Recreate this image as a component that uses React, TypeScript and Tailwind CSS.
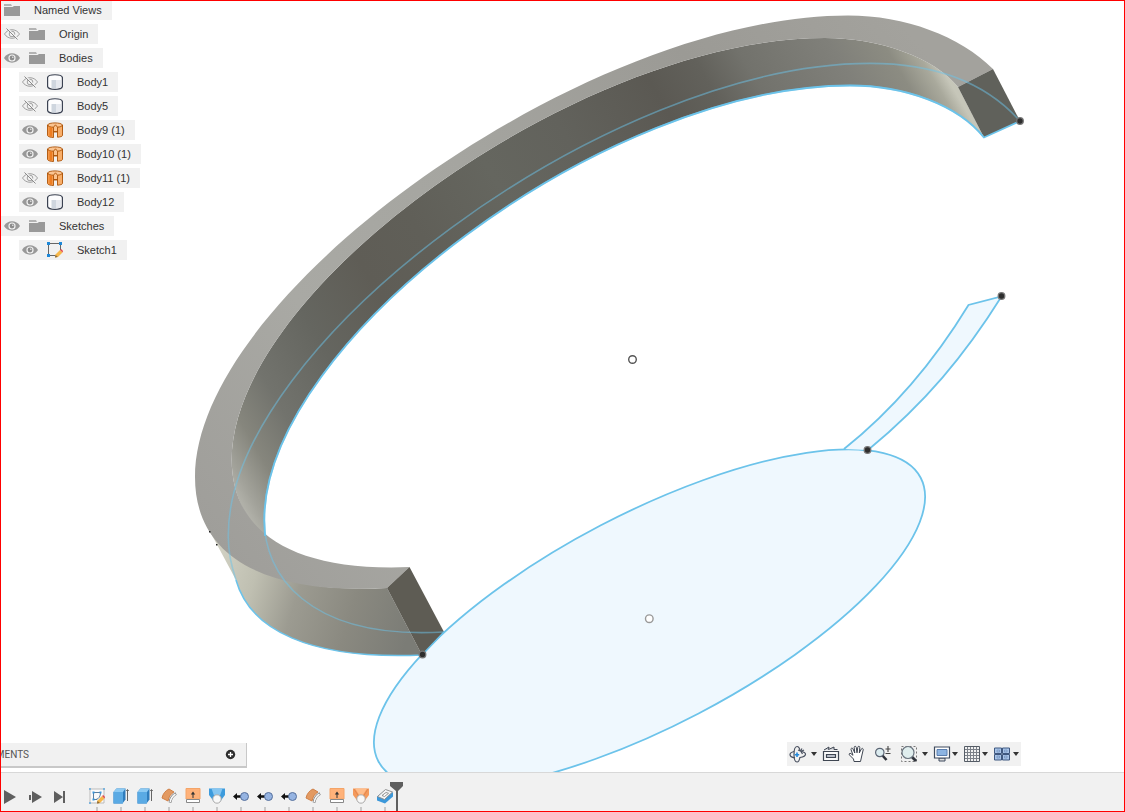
import React, { useState } from 'react';

type IconName = 'folder' | 'body' | 'surface' | 'sketch';

interface TreeNode {
  label: string;
  icon: IconName;
  level: number;
  visible?: boolean;
}

const nodes: TreeNode[] = [
  { label: 'Named Views', icon: 'folder', level: 0 },
  { label: 'Origin', icon: 'folder', level: 0, visible: false },
  { label: 'Bodies', icon: 'folder', level: 0, visible: true },
  { label: 'Body1', icon: 'body', level: 1, visible: false },
  { label: 'Body5', icon: 'body', level: 1, visible: false },
  { label: 'Body9 (1)', icon: 'surface', level: 1, visible: true },
  { label: 'Body10 (1)', icon: 'surface', level: 1, visible: true },
  { label: 'Body11 (1)', icon: 'surface', level: 1, visible: false },
  { label: 'Body12', icon: 'body', level: 1, visible: true },
  { label: 'Sketches', icon: 'folder', level: 0, visible: true },
  { label: 'Sketch1', icon: 'sketch', level: 1, visible: true },
];

const Eye = ({ open }: { open: boolean }) =>
  open ? (
    <svg width="16" height="16" viewBox="0 0 16 16">
      <path d="M0 8C3.500 1.800 12.500 1.800 16 8C12.500 14.200 3.500 14.200 0 8Z" fill="#999" />
      <circle cx="8" cy="8" r="3.600" fill="#f1f1f1" />
      <circle cx="8" cy="8" r="2.400" fill="#8c8c8c" />
      <circle cx="8.800" cy="7.200" r=".7" fill="#f1f1f1" />
    </svg>
  ) : (
    <svg width="16" height="16" viewBox="0 0 16 16" fill="none" stroke="#a0a0a0">
      <path d="M.5 8C4 2.300 12 2.300 15.500 8C12 13.700 4 13.700 .5 8Z" />
      <circle cx="8" cy="8" r="2.800" />
      <path d="M3.500 2.500L14 13" stroke="#f1f1f1" strokeWidth="1.500" />
      <path d="M2.500 2.500L13.500 13.500" stroke="#888" />
    </svg>
  );

const Pencil = () => (
  <g>
    <path d="M8.500 12.500L13 8L15.500 10.500L11 15L8 15.500Z" fill="#f7b84a" />
    <path d="M13 8L14.200 7L16 9L15.500 10.500Z" fill="#e5484d" />
    <path d="M8.500 12.800L10.800 15L8 15.600Z" fill="#8a6a3c" />
  </g>
);

const TreeIcon = ({ name }: { name: IconName }) => {
  switch (name) {
    case 'folder':
      return (
        <svg width="16" height="16" viewBox="0 0 16 16" fill="#999">
          <path d="M0 2H7L8 4H0Z" opacity=".7" />
          <path d="M0 5H8.500L10 4H16V14H0Z" />
        </svg>
      );
    case 'body':
      return (
        <svg width="16" height="16" viewBox="0 0 16 16">
          <path
            d="M.6 3.500C1.500 -.2 14.500 -.2 15.400 3.500V12.500C14.500 16.200 1.500 16.200 .6 12.500Z"
            fill="#fdfdfe"
            stroke="#3b4252"
            strokeWidth="1.200"
          />
          <path d="M4.500 6H9V14.500H4.500Z" fill="#cfd6df" />
          <path d="M9 6H14V13.500L9 14.500Z" fill="#e6e9ef" />
        </svg>
      );
    case 'surface':
      return (
        <svg width="16" height="16" viewBox="0 0 16 16" stroke="#ad5207" strokeWidth=".9" strokeLinejoin="round">
          <path d="M.5 3C1.500 .2 14.500 .2 15.500 3V8L10.500 10H6Z" fill="#fac491" />
          <path d="M.5 3C1 4.500 3.500 5.200 6.500 5.200V15.500C3.500 15.400 1 14.800 .5 13.500Z" fill="#f49a4c" />
          <path d="M2.500 5.500H5V14.500L2.500 14Z" fill="#ed7d22" stroke="none" />
          <path d="M15.500 3C15.200 4.300 13 5 10.500 5.200V15.200C13 15 15.200 14.500 15.500 13.500Z" fill="#f8ae69" />
          <path d="M6.500 5.200L8.500 2.800M10.500 5.200L8.500 2.800M6.500 9.500H10.500" fill="none" />
        </svg>
      );
    default:
      return (
        <svg width="16" height="16" viewBox="0 0 16 16">
          <path d="M1.500 3V13M3 1.500H13M13.500 3V8M3 13.500H8" stroke="#666" fill="none" />
          <path d="M0 0H3V3H0ZM12 0H15V3H12ZM0 12H3V15H0Z" fill="#1e88d8" />
          <Pencil />
        </svg>
      );
  }
};

const TreeRow = ({ node }: { node: TreeNode }) => {
  const [visible, setVisible] = useState(!!node.visible);
  return (
    <li className={`flex h-5 w-fit items-center bg-[#f1f1f1] pl-[3px] pr-2.5 ${node.level ? 'ml-[18px]' : ''}`}>
      {node.visible !== undefined && (
        <button
          type="button"
          aria-label={`Toggle ${node.label}`}
          className="mr-[9px]"
          onClick={() => setVisible(!visible)}
        >
          <Eye open={visible} />
        </button>
      )}
      <TreeIcon name={node.icon} />
      <span className="ml-3.5 text-[11px] leading-5 text-[#333]">{node.label}</span>
    </li>
  );
};

const outerTop =
  'M993 69C960 36 905 15.500 848 15.500C587 15.500 195 292 195 477C195 557 265 595 387 588';
const bottomInner =
  'M984 137.500C958 105 905 85.500 850 85.500C607 85.500 264.300 340 264.300 520C264 572 305 640 444 632';
const bottomOuter =
  'M1020 121C985 82 935 63.400 870 63.400C610 63.400 228.300 344 228.300 535C228 550 231 565 236 580';

const Dot = ({ x, y }: { x: number; y: number }) => (
  <circle cx={x} cy={y} r="3.300" fill="#2e2e2e" stroke="#777" strokeWidth="1.300" />
);

const Viewport = () => (
  <svg
    className="absolute inset-0 h-full w-full"
    viewBox="1 1 1123 771"
    preserveAspectRatio="xMinYMin slice"
    role="img"
    aria-label="Model viewport"
  >
    <defs>
      <linearGradient id="inner" gradientUnits="userSpaceOnUse" x1="240" y1="520" x2="960" y2="100">
        <stop offset="0" stopColor="#bdbdb5" />
        <stop offset=".025" stopColor="#a3a39b" />
        <stop offset=".06" stopColor="#86867d" />
        <stop offset=".11" stopColor="#72736d" />
        <stop offset=".19" stopColor="#656660" />
        <stop offset=".28" stopColor="#5f5d56" />
        <stop offset=".36" stopColor="#605f58" />
        <stop offset=".47" stopColor="#65665f" />
        <stop offset=".57" stopColor="#62625c" />
        <stop offset=".69" stopColor="#5b5953" />
        <stop offset=".75" stopColor="#62615b" />
        <stop offset=".8" stopColor="#72726c" />
        <stop offset=".9" stopColor="#80807a" />
        <stop offset=".955" stopColor="#8c8c82" />
        <stop offset=".985" stopColor="#a9a99c" />
        <stop offset="1" stopColor="#c6c6b9" />
      </linearGradient>
      <linearGradient id="outer" gradientUnits="userSpaceOnUse" x1="215" y1="570" x2="410" y2="630">
        <stop offset="0" stopColor="#d0d0c2" />
        <stop offset=".2" stopColor="#bfbfb1" />
        <stop offset=".42" stopColor="#9c9b91" />
        <stop offset=".7" stopColor="#8a8980" />
        <stop offset="1" stopColor="#7b7c76" />
      </linearGradient>
      <linearGradient id="top" gradientUnits="userSpaceOnUse" x1="230" y1="560" x2="900" y2="20">
        <stop offset="0" stopColor="#9f9e9a" />
        <stop offset=".25" stopColor="#a9a9a4" />
        <stop offset=".5" stopColor="#a5a5a0" />
        <stop offset=".78" stopColor="#9b9a95" />
        <stop offset="1" stopColor="#a3a29d" />
      </linearGradient>
    </defs>

    {/* base profile */}
    <g fill="#eff8fe" stroke="#6cc3ea" strokeWidth="1.800">
      <ellipse cx="649.500" cy="619.500" rx="306" ry="106" transform="rotate(-27.600 649.500 619.500)" />
      <path d="M844 449C893 410 935 360 968.500 305L1001.500 296.500C965 355 925 403 868 450" />
    </g>

    {/* ring body */}
    <path
      d="M958 87C935 58 880 38 825 38C582 38 231.700 287 231.700 460C232 492 243 516 265 537L264.300 520C264.300 340 607 85.500 850 85.500C905 85.500 958 105 984 137.500Z"
      fill="url(#inner)"
    />
    <path
      d="M207 526L236 580C250 630 310 660 422 655L387 588C300 592 240 575 207 526Z"
      fill="url(#outer)"
    />
    <path
      d={`${outerTop}L409.500 567C285 572 232 527 231.700 460C231.700 287 582 38 825 38C880 38 935 58 958 87Z`}
      fill="url(#top)"
    />
    <path d="M409.500 567L387 588L422 655L444 632Z" fill="#5e5c54" />
    <path d="M993 69L958 87L984 137.500L1020 121Z" fill="#60615b" />
    <path d="M209 531h1.500v1.500h-1.500zM216 544h1.500v1.500h-1.500z" fill="#222" />

    {/* sketch edges, dimmed where they run behind the body */}
    <g fill="none" stroke="#6cc3ea">
      <path d={bottomOuter} strokeWidth="1.600" opacity=".5" />
      <path d={bottomInner} strokeWidth="1.600" opacity=".5" />
      <path
        d="M265 536L264.300 520C264.300 340 607 85.500 850 85.500C905 85.500 958 105 984 137.500L1020 121"
        strokeWidth="1.800"
      />
      <path d="M236 580C250 630 310 660 422 655L444 632" strokeWidth="1.600" />
    </g>

    <Dot x={1020} y={121} />
    <Dot x={1001.5} y={296} />
    <Dot x={867.5} y={450} />
    <Dot x={422.5} y={654.5} />
    <circle cx="632.500" cy="359.500" r="3.800" fill="#fff" stroke="#555" strokeWidth="1.400" />
    <circle cx="649.300" cy="618.700" r="3.800" fill="#fff" stroke="#999" strokeWidth="1.400" />
  </svg>
);

const Caret = () => (
  <svg width="6" height="16" viewBox="0 0 6 16">
    <path d="M0 6H6L3 10Z" fill="#333" />
  </svg>
);

const Orbit = () => (
  <svg width="18" height="18" viewBox="0 0 18 18" fill="none" stroke="#4a5160" strokeWidth="1.200">
    <path d="M11 5.500C10.500 3 9.300 1.500 8 1.500C6 1.500 5 5 5 9.500C5 14 6.200 17 8 17C9.500 17 10.500 15 11 12" />
    <path d="M5 6.500C2.500 7.200 1 8.200 1 9.500C1 11.300 3 12.500 6 12.800M11 12.500C14.500 12 16.500 10.800 16.500 9.300C16.500 8 15 7 12.500 6.500" />
    <path d="M9 5L11.500 6L13 3.500M13.500 9L12 6.500L15 5" />
    <path d="M8 7.500V12M5.800 9.700H10.200" stroke="#2389dc" strokeWidth="1.600" />
  </svg>
);

const LookAt = () => (
  <svg width="18" height="18" viewBox="0 0 18 18" fill="none" stroke="#3f4652" strokeWidth="1.200">
    <path d="M2 5L7 2L6.500 4.500L12 2V4.500H15.500" fill="#cfd2d8" strokeWidth="1" />
    <path d="M1.500 6.500H16.500V15.500H1.500Z" fill="#fafafa" />
    <path d="M4.500 9.500H13.500V12.500H4.500Z" fill="#b9bec8" />
  </svg>
);

const Pan = () => (
  <svg width="18" height="18" viewBox="0 0 18 18" fill="#fff" stroke="#3f4652" strokeLinejoin="round">
    <path d="M6 16.500L5.500 14L1.500 10C.5 8.800 1.800 7.800 3 8.700L5 10.300L3 4.500C2.700 3 4.500 2.500 5 4L6.800 8L6.200 2.500C6.200 .9 8 .9 8.300 2.500L9 7.800L9.800 2.200C10.200 .8 11.900 1 11.800 2.600L11.300 8L13.300 4C14 2.800 15.500 3.400 15.200 4.800L13.500 12L12.500 16.500Z" />
  </svg>
);

const Zoom = () => (
  <svg width="18" height="18" viewBox="0 0 18 18" fill="none">
    <path d="M8.500 10.500L12.500 15" stroke="#30343c" strokeWidth="2.600" />
    <circle cx="5.800" cy="7.500" r="4.200" fill="#dcecf0" stroke="#5b6574" strokeWidth="1.200" />
    <path d="M14 1V7M11.500 4H16.500M11.500 8.500H16.500" stroke="#444" strokeWidth="1.100" />
  </svg>
);

const ZoomWindow = () => (
  <svg width="18" height="18" viewBox="0 0 18 18" fill="none">
    <path d="M1.500 1.500H16.500V16.500H1.500Z" stroke="#777" strokeDasharray="2 2" />
    <path d="M11.500 11.500L16 16" stroke="#30343c" strokeWidth="2.800" />
    <circle cx="8" cy="7.500" r="6" fill="#e0eeee" stroke="#6a747f" strokeWidth="1.200" />
  </svg>
);

const Display = () => (
  <svg width="18" height="18" viewBox="0 0 18 18" stroke="#3f4b5e">
    <path d="M6 13H12V16H6Z" fill="#ddd" />
    <path d="M1.500 2H16.500V13H1.500Z" fill="#fff" strokeWidth="1.200" />
    <path d="M4 4.500H14V10.500H4Z" fill="#8db4e2" stroke="#5b7eae" />
  </svg>
);

const GridIcon = () => (
  <svg width="18" height="18" viewBox="0 0 18 18" fill="none" stroke="#7b8088">
    <path d="M4.500 2V16M7.500 2V16M10.500 2V16M13.500 2V16M2 4.500H16M2 7.500H16M2 10.500H16M2 13.500H16" />
    <path d="M1.500 1.500H16.500V16.500H1.500Z" stroke="#555c66" />
  </svg>
);

const Panes = () => (
  <svg width="18" height="18" viewBox="0 0 18 18" fill="#a9c4e8" stroke="#3f5880">
    <path d="M1.500 3H8.500V8.500H1.500ZM9.500 3H16.500V8.500H9.500ZM1.500 9.500H8.500V15H1.500ZM9.500 9.500H16.500V15H9.500Z" />
    <path
      d="M4 5H6.500V7H4ZM11.500 5H14V7H11.500ZM4 11H6.500V13H4ZM11.500 11H14V13H11.500Z"
      stroke="#7594c0"
      strokeWidth=".8"
    />
  </svg>
);

const NavBar = () => (
  <div className="flex h-6 items-center bg-[#f1f1f1] px-0.5">
    <button type="button" aria-label="Orbit" className="flex items-center gap-1">
      <Orbit />
      <Caret />
    </button>
    <button type="button" aria-label="Look at" className="ml-[5px]">
      <LookAt />
    </button>
    <button type="button" aria-label="Pan" className="ml-2">
      <Pan />
    </button>
    <button type="button" aria-label="Zoom" className="ml-2">
      <Zoom />
    </button>
    <button type="button" aria-label="Zoom window" className="ml-2 flex items-center gap-1">
      <ZoomWindow />
      <Caret />
    </button>
    <button type="button" aria-label="Display settings" className="ml-[5px] flex items-center gap-px">
      <Display />
      <Caret />
    </button>
    <button type="button" aria-label="Grid and snaps" className="ml-[5px] flex items-center gap-px">
      <GridIcon />
      <Caret />
    </button>
    <button type="button" aria-label="Viewports" className="ml-[5px] flex items-center gap-0.5">
      <Panes />
      <Caret />
    </button>
  </div>
);

const features = [
  'sketch',
  'extrude',
  'extrude',
  'patch',
  'offset',
  'loft',
  'move',
  'move',
  'move',
  'patch',
  'offset',
  'loft-surface',
  'thicken',
];

const FeatureIcon = ({ name }: { name: string }) => {
  switch (name) {
    case 'sketch':
      return (
        <>
          <path d="M1 1H15V15H1Z" fill="#fafafa" stroke="#bbb" />
          <path d="M4.500 5V11.500H8M5 4.500H11.500C11.500 8 10 11 7 11.500" fill="none" stroke="#5b7fa0" />
          <path d="M3.500 3.500h2v2h-2zM10.500 3.500h2v2h-2zM3.500 10.500h2v2h-2z" fill="#3b97dc" />
          <path d="M0 0h2v2H0zM14 0h2v2h-2zM0 14h2v2H0z" fill="#7db4dc" />
          <Pencil />
        </>
      );
    case 'extrude':
      return (
        <>
          <path d="M.5 4L3.500 .5H12.500V11.500L9.500 15.500H.5Z" fill="#2f7dbd" />
          <path d="M.5 4L3.500 .5H12.500L10 4Z" fill="#8ccaf3" />
          <path d="M.5 4H10V15.500H.5Z" fill="#5aaae4" />
          <path d="M14.500 13V2M13.300 3L14.500 1.500L15.700 3" stroke="#555" strokeWidth=".9" fill="none" />
        </>
      );
    case 'patch':
      return (
        <>
          <path d="M1 10C2 5.500 4.500 2.500 8 1L13 4C10 5.500 8 8.500 7 13Z" fill="#e39a62" stroke="#cf8048" />
          <path d="M9 14.500C9.500 10.500 11.500 7.500 15 5.500" fill="none" stroke="#777" strokeWidth="2.800" />
          <path d="M9.200 14C9.700 10.500 11.500 8 14.500 6" fill="none" stroke="#f8f8f8" strokeWidth="1.600" />
        </>
      );
    case 'offset':
      return (
        <>
          <path d="M1 .5H15V11H1Z" fill="#ffb27a" stroke="#f4a468" />
          <path d="M1.500 11.500H14.500V14.500H1.500Z" fill="#fff" stroke="#888" />
          <path d="M8 10V5.500" stroke="#333" />
          <path d="M5.800 6.500L8 3.500L10.200 6.500Z" fill="#333" />
        </>
      );
    case 'loft':
      return (
        <>
          <path d="M0 .5H16V7L11.500 13H4.500L0 7Z" fill="#3d9bdc" />
          <path d="M2.500 .5H13.500L11 7.500H5Z" fill="#86c6f1" />
          <circle cx="8" cy="11" r="4.200" fill="#f8f8f8" stroke="#aaa" />
        </>
      );
    case 'loft-surface':
      return (
        <>
          <path d="M0 .5H16V7L11.500 13H4.500L0 7Z" fill="#f49a5c" />
          <path d="M2 .5H14L9.500 7.500H6.500Z" fill="#ffbd8b" />
          <path d="M1 1L5.500 8M15 1L10.500 8" stroke="#dd824a" strokeWidth=".8" />
          <circle cx="8" cy="11" r="4.200" fill="#f8f8f8" stroke="#aaa" />
        </>
      );
    case 'move':
      return (
        <>
          <path d="M0 8.500L4 5V7.300H8V9.700H4V12Z" fill="#111" />
          <circle cx="11.500" cy="8.500" r="4" fill="#96b4e2" stroke="#56709c" />
        </>
      );
    default:
      return (
        <>
          <path d="M0 8.500L9 2L16 4.500V8.500L8 15.500L0 12.500Z" fill="#3c98da" />
          <path d="M.5 8.500L8.500 1.500L15.500 4L7.500 11.500Z" fill="#f4f4f4" stroke="#888" strokeWidth=".9" />
          <path d="M5 7.500L9 4.500L11.500 5.300L7.500 8.500Z" fill="#fff" stroke="#888" strokeWidth=".9" />
        </>
      );
  }
};

const Timeline = () => (
  <footer className="flex h-[39px] border-t border-[#d8d8d8] bg-[#f1f1f1] pl-[3px]">
    <div className="flex gap-3 pt-2.5">
      <button type="button" aria-label="Play">
        <svg width="13" height="16" viewBox="0 0 13 16" fill="#5f5f5f">
          <path d="M0 1L12 8L0 15Z" />
        </svg>
      </button>
      <button type="button" aria-label="Step forward">
        <svg width="13" height="16" viewBox="0 0 13 16" fill="#5f5f5f">
          <path d="M0 6H2V11H0ZM3 2L13 8L3 14Z" />
        </svg>
      </button>
      <button type="button" aria-label="Go to end">
        <svg width="13" height="16" viewBox="0 0 13 16" fill="#5f5f5f">
          <path d="M0 2L9 8L0 14ZM9 2H11V14H9Z" />
        </svg>
      </button>
    </div>
    <ol className="relative ml-[18px] flex">
      {features.map((name, i) => (
        <li key={i} className="flex w-6 flex-col items-center justify-between pt-[15px]">
          <button type="button" aria-label={`${name} feature`}>
            <svg width="16" height="16" viewBox="0 0 16 16">
              <FeatureIcon name={name} />
            </svg>
          </button>
          <span className="h-1 w-0.5 bg-[#c8c8c8]" />
        </li>
      ))}
      <li className="absolute -right-1.5 bottom-0">
        <svg width="13" height="29" viewBox="0 0 13 29" fill="#5f5f5f">
          <path d="M0 0H13V4L8 9V29H6V9L0 4Z" />
        </svg>
      </li>
    </ol>
  </footer>
);

const App = () => {
  return (
    <div className="flex min-h-screen flex-col border border-[#f00] bg-white font-['Liberation_Sans',Arial,sans-serif] [&_svg]:block">
      <main className="relative flex flex-1 flex-col overflow-hidden">
        <Viewport />
        <ul className="relative -mt-px flex flex-1 flex-col gap-1">
          {nodes.map((node) => (
            <TreeRow key={node.label} node={node} />
          ))}
        </ul>
        <div className="relative flex items-start justify-between pb-1">
          <div className="mt-px flex h-[25px] w-[246px] items-center justify-between border-b-2 border-r border-[#c8c8c8] bg-[#f1f1f1] pr-2.5">
            <h2 className="flex w-7 justify-end overflow-hidden font-['Roboto',sans-serif] text-[10px] leading-4 text-[#555]">
              COMMENTS
            </h2>
            <button type="button" aria-label="Add comment">
              <svg width="11" height="11" viewBox="0 0 11 11">
                <circle cx="5.500" cy="5.500" r="4.700" fill="#2e2e2e" />
                <path d="M5.500 3V8M3 5.500H8" stroke="#fff" strokeWidth="1.300" />
              </svg>
            </button>
          </div>
          <div className="mr-[103px]">
            <NavBar />
          </div>
        </div>
      </main>
      <Timeline />
    </div>
  );
};

export default App;
